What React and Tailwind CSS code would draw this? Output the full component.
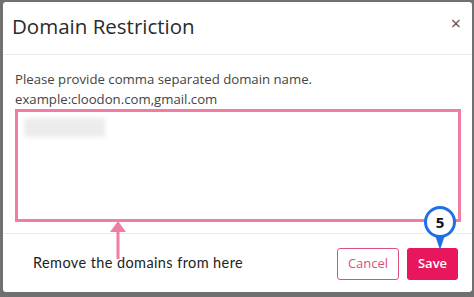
import React from 'react';

const Marker = ({ n }) => (
  <div className="absolute left-[420px] top-[203px] w-[34px] h-[46px]">
    <svg width="34" height="46" viewBox="0 0 34 46">
      <path d="M12 30 L17 45 L22 30 Z" fill="#1f6fe5" />
      <circle cx="17" cy="17" r="14.5" fill="#fff" stroke="#1f6fe5" strokeWidth="3" />
    </svg>
    <span className="absolute left-0 top-[6px] w-[34px] text-center text-[15px] font-bold text-[#111] leading-[22px] font-['Open_Sans',sans-serif]">
      {n}
    </span>
  </div>
);

const DomainRestriction = () => {
  return (
    <div className="w-[474px] h-[297px] bg-[#707070] pt-[2px] pl-[3px] font-['Open_Sans',sans-serif]">
      <div className="relative w-[469px] h-[290px] bg-white rounded-[3px] flex flex-col">
        <div className="h-[53px] flex items-center justify-between pl-[9px] pr-[11px] border-b border-[#ececec]">
          <h2 className="text-[20.5px] text-[#2b2b2b] mb-[4px]">Domain Restriction</h2>
          <span className="text-[#555] text-[18px] leading-none mb-[10px]">×</span>
        </div>

        <div className="flex-1 px-[12px] pt-[14px] border-b border-[#ececec]">
          <p className="text-[13.2px] leading-[20px] text-[#444]">Please provide comma separated domain name.</p>
          <p className="text-[13.2px] leading-[20px] text-[#444]">example:cloodon.com,gmail.com</p>
          <div className="h-[113px] w-[446px] border-[3px] border-[#f07ea2] p-[6px]">
            <div className="w-[81px] h-[19px] bg-[#ececec] blur-[2px]"></div>
          </div>
        </div>

        <div className="h-[58px] flex items-center justify-between pl-[30px] pr-[14px]">
          <span className="text-[14.5px] text-[#222] font-['Lato',sans-serif] tracking-[0.4px]">Remove the domains from here</span>
          <div className="flex gap-[8px] mt-[2px]">
            <button className="h-[32px] w-[62px] rounded-[3px] border border-[#e0507f] text-[#e0507f] text-[13px]">Cancel</button>
            <button className="h-[32px] w-[51px] rounded-[3px] bg-[#e8175d] text-white text-[13px] font-semibold">Save</button>
          </div>
        </div>

        <svg className="absolute left-[104px] top-[216px]" width="22" height="42" viewBox="0 0 22 42">
          <path d="M11 8 L11 41" stroke="#f07ea2" strokeWidth="3" />
          <path d="M3 14 L11 3 L19 14 Z" fill="#f07ea2" />
        </svg>

        <Marker n={5} />
      </div>
    </div>
  );
};

export default function App() {
  return <DomainRestriction />;
}
